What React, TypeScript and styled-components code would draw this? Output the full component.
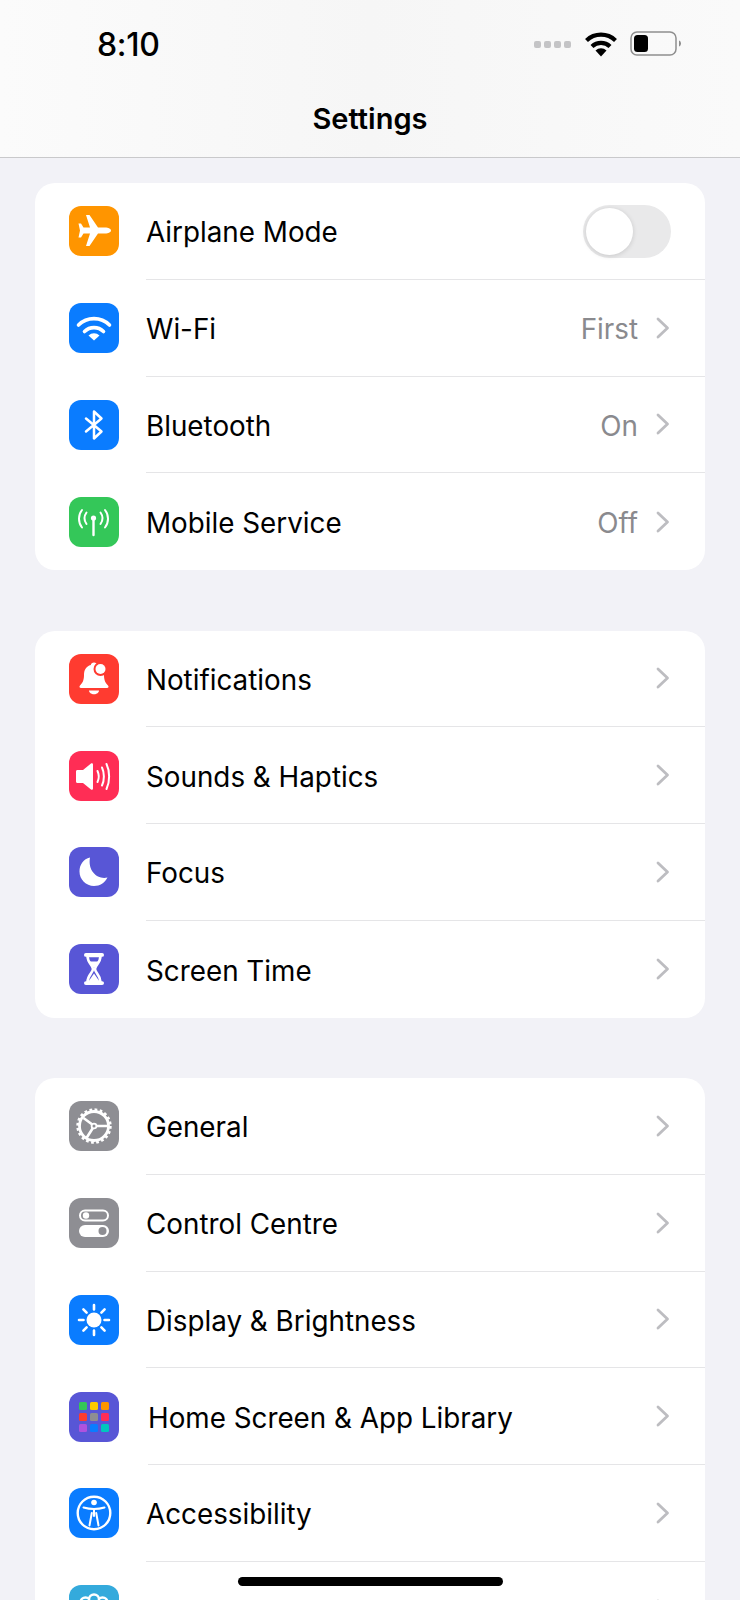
import React from "react";
import styled, { createGlobalStyle } from "styled-components";

const GlobalStyle = createGlobalStyle`
body {
  margin: 0;
  background: #f2f2f7;
  font-family: Inter, "Noto Sans", sans-serif;
}
`;

const Page = styled.div`
position: relative;
width: 740px;
height: 1600px;
overflow: hidden;
background: #f2f2f7;
`;

const Header = styled.header`
height: 158px;
box-sizing: border-box;
background: linear-gradient(90deg, #fbfbfb 0%, #f6f6f6 50%, #fafafa 100%);
border-bottom: 1px solid #c9c9cb;
display: flex;
flex-direction: column;
`;

const StatusBar = styled.div`
display: flex;
align-items: center;
justify-content: space-between;
padding: 25px 58px 0 97px;
height: 38px;
`;

const Time = styled.div`
font-size: 32px;
font-weight: 500;
color: #000;
letter-spacing: -0.3px;
`;

const StatusIcons = styled.div`
display: flex;
align-items: center;
gap: 12px;
`;

const Title = styled.h1`
margin: 38px 0 0;
font-size: 29px;
line-height: 36px;
font-weight: 600;
text-align: center;
color: #000;
`;

const Cards = styled.div`
display: flex;
flex-direction: column;
gap: 60.5px;
padding: 25px 35px 0;
`;

const Card = styled.section`
background: #fff;
border-radius: 20px;
overflow: hidden;
`;

const Row = styled.div`
display: flex;
align-items: center;
height: 96.75px;
padding-left: 34px;
`;

const IconTile = styled.div<{ $color: string }>`
flex: none;
width: 50px;
height: 50px;
border-radius: 12px;
background: ${(p) => p.$color};
`;

const RowBody = styled.div<{ $shift?: boolean; $last?: boolean }>`
flex: 1;
height: 100%;
box-sizing: border-box;
margin-left: ${(p) => (p.$shift ? 29 : 27)}px;
display: flex;
align-items: center;
border-bottom: ${(p) => (p.$last ? "none" : "1.5px solid #e5e5e7")};
padding-right: 35px;
`;

const Label = styled.span`
flex: 1;
font-size: 27.8px;
padding-top: 3px;
color: #000;
`;

const Value = styled.span`
font-size: 27.8px;
padding-top: 3px;
color: #8a8a8e;
margin-right: 18px;
`;

const Switch = styled.div`
width: 88px;
height: 53px;
border-radius: 27px;
background: #e9e9ea;
padding: 3px;
box-sizing: border-box;
margin: 1px -1px 0 0;
`;

const Knob = styled.div`
width: 47px;
height: 47px;
border-radius: 50%;
background: #fff;
box-shadow: 0 1px 5px rgba(0, 0, 0, 0.14);
`;

const HomeIndicator = styled.div`
position: absolute;
left: 238px;
bottom: 14px;
width: 265px;
height: 9px;
border-radius: 5px;
background: #000;
`;

const Chevron = () => (
  <svg width="14" height="22" viewBox="0 0 14 22" fill="none">
    <path d="M2 2l9.5 9L2 20" stroke="#bdbdc1" strokeWidth="2.8" strokeLinecap="round" strokeLinejoin="round" />
  </svg>
);

const Glyph = ({ children }: { children: React.ReactNode }) => (
  <svg width="50" height="50" viewBox="0 0 50 50" fill="none" style={{ display: "block" }}>
    {children}
  </svg>
);

const w = "#fff";

const icons: Record<string, React.ReactNode> = {
  plane: (
    <path
      fill={w}
      d="M42 24.5c0-1.6-2.5-3-6-3h-7L20.5 9H17l4 12.5h-6.5L12 17.5H9.5l1.500 7-1.500 7H12l2.500-4H21L17 40h3.500L29 27.500h7c3.500 0 6-1.400 6-3z"
    />
  ),
  wifi: (
    <>
      <path d="M9.500 22a22 22 0 0 1 31 0M15.500 28.500a13.500 13.500 0 0 1 19 0" stroke={w} strokeWidth="3.600" strokeLinecap="round" />
      <path fill={w} d="M25 37.500l-5.500-5a8 8 0 0 1 11 0z" />
    </>
  ),
  bluetooth: (
    <path d="M17 18.500L32.500 31.500 25 38.500V11.500l7.500 7L17 31.500" stroke={w} strokeWidth="2.500" strokeLinecap="round" strokeLinejoin="round" />
  ),
  antenna: (
    <>
      <circle cx="24.500" cy="21" r="2.600" fill={w} />
      <path d="M24.500 22v16" stroke={w} strokeWidth="2.400" strokeLinecap="round" />
      <path d="M17.500 15.500c-2.500 3.500-2.500 8 0 11.500M31.500 15.500c2.500 3.500 2.500 8 0 11.500M13 13c-4 5-4 12.500 0 17.500M36 13c4 5 4 12.500 0 17.500" stroke={w} strokeWidth="2" strokeLinecap="round" />
    </>
  ),
  bell: (
    <>
      <path
        fill={w}
        d="M25 8.500c-1.800 0-3 1-3.200 2.600-4.800 1.300-6.800 5.200-6.800 10 0 5.500-1.500 8-4 10.500-1 1-.5 2.500 1 2.500h26c1.500 0 2-1.500 1-2.500-2.500-2.500-4-5-4-10.500 0-4.800-2-8.700-6.800-10-.2-1.600-1.400-2.600-3.200-2.600z"
      />
      <path fill={w} d="M20 36.500h10c0 2-2.200 3.800-5 3.800s-5-1.800-5-3.800z" />
      <circle cx="31.500" cy="15" r="7" fill="#ff3b30" />
      <circle cx="31.500" cy="15" r="5" fill={w} />
    </>
  ),
  sound: (
    <>
      <path fill={w} d="M7 20.500c0-.8.500-1.500 1.500-1.500H14l8-6.500c.8-.6 2-.2 2 1v24c0 1.200-1.200 1.600-2 1L14 32H8.500C7.500 32 7 31.300 7 30.500z" />
      <path d="M28.500 20c1.500 3.200 1.500 7.800 0 11M33 16.500c2.500 5.200 2.500 12.800 0 18M37.500 13c3.500 7.200 3.500 17.800 0 25" stroke={w} strokeWidth="2" strokeLinecap="round" />
    </>
  ),
  moon: <path fill={w} d="M21 10.500C14.500 12 10.500 17.500 10.500 24.500c0 8 6.500 14.500 14.500 14.500 6 0 11-3.500 13.500-8.500-9.500 2.500-20-6-17.500-20z" />,
  hourglass: (
    <>
      <rect x="15" y="9" width="20" height="3.800" rx="1.900" fill={w} />
      <rect x="15" y="37.200" width="20" height="3.800" rx="1.900" fill={w} />
      <path d="M18.500 12c0 7 5.500 9 5.500 13s-5.500 6-5.500 13h13c0-7-5.500-9-5.500-13s5.500-6 5.500-13z" stroke={w} strokeWidth="2.600" />
      <path fill={w} d="M20.500 17.500h9c-1 3-3.200 4.800-4.500 6.500-1.300-1.700-3.500-3.500-4.500-6.500zM25 29.500l5.500 8h-11z" />
    </>
  ),
  gear: (
    <>
      <circle cx="25" cy="25" r="14.500" stroke={w} strokeWidth="2.800" />
      <circle cx="25" cy="25" r="16" stroke={w} strokeWidth="3.400" strokeDasharray="2.700 2.330" />
      <circle cx="25" cy="25" r="2.400" stroke={w} strokeWidth="1.800" />
      <path d="M23.300 23.500L14.500 17M27.400 25h12M23.700 27.200L17.500 37" stroke={w} strokeWidth="2.600" />
    </>
  ),
  toggles: (
    <>
      <rect x="11" y="12.500" width="28" height="10" rx="5" stroke={w} strokeWidth="2" />
      <circle cx="17" cy="17.500" r="3.200" fill={w} />
      <rect x="10" y="27" width="30" height="12" rx="6" fill={w} />
      <circle cx="33.500" cy="33" r="4" fill="#8e8e93" />
    </>
  ),
  sun: (
    <>
      <circle cx="25" cy="25" r="7.500" fill={w} />
      <path
        d="M25 10v4.500M25 35.500V40M10 25h4.500M35.500 25H40M14.400 14.400l3.200 3.200M32.400 32.400l3.200 3.200M14.400 35.600l3.200-3.200M32.400 17.600l3.200-3.200"
        stroke={w}
        strokeWidth="2.600"
        strokeLinecap="round"
      />
    </>
  ),
  grid: (
    <>
      {["#34c759", "#ffcc00", "#ff9500", "#ff3b30", "#8e8e93", "#ff2d55", "#af52de", "#0a7cff", "#00c7be"].map((c, i) => (
        <rect key={c} x={10 + (i % 3) * 11} y={10 + Math.floor(i / 3) * 11} width="8" height="8" rx="1.500" fill={c} />
      ))}
    </>
  ),
  access: (
    <>
      <circle cx="25" cy="25" r="16.300" stroke={w} strokeWidth="2.400" />
      <circle cx="25" cy="14.500" r="2.800" fill={w} />
      <path d="M14.500 19.500c3.500 1 7 1.500 10.500 1.500s7-.5 10.500-1.500M25 21v7M22.800 25l-2.300 12.500M27.200 25l2.300 12.500" stroke={w} strokeWidth="2" strokeLinecap="round" />
    </>
  ),
  wallpaper: (
    <>
      <circle cx="16.500" cy="17.500" r="5" stroke={w} strokeWidth="2.500" />
      <circle cx="33.500" cy="17.500" r="5" stroke={w} strokeWidth="2.500" />
      <circle cx="25" cy="14.500" r="5" stroke={w} strokeWidth="2.500" fill="#34aadc" />
    </>
  ),
};

type Item = {
  label: string;
  icon: string;
  color: string;
  value?: string;
  toggle?: boolean;
  shift?: boolean;
};

const groups: Item[][] = [
  [
    { label: "Airplane Mode", icon: "plane", color: "#ff9500", toggle: true },
    { label: "Wi-Fi", icon: "wifi", color: "#0a7cff", value: "First" },
    { label: "Bluetooth", icon: "bluetooth", color: "#0a7cff", value: "On" },
    { label: "Mobile Service", icon: "antenna", color: "#34c759", value: "Off" },
  ],
  [
    { label: "Notifications", icon: "bell", color: "#ff3b30" },
    { label: "Sounds & Haptics", icon: "sound", color: "#ff2d55" },
    { label: "Focus", icon: "moon", color: "#5856d6" },
    { label: "Screen Time", icon: "hourglass", color: "#5856d6" },
  ],
  [
    { label: "General", icon: "gear", color: "#8e8e93" },
    { label: "Control Centre", icon: "toggles", color: "#8e8e93" },
    { label: "Display & Brightness", icon: "sun", color: "#0a7cff" },
    { label: "Home Screen & App Library", icon: "grid", color: "#5856d6", shift: true },
    { label: "Accessibility", icon: "access", color: "#0a7cff" },
    // row runs off the bottom of the screen, only the top of its icon shows
    { label: "", icon: "wallpaper", color: "#34aadc" },
  ],
];

const App = () => {
  return (
    <Page>
      <GlobalStyle />
      <Header>
        <StatusBar>
          <Time>8:10</Time>
          <StatusIcons>
            <svg width="38" height="7" viewBox="0 0 38 7">
              {[0, 10, 20, 30].map((x) => (
                <rect key={x} x={x} y="0" width="7" height="7" rx="2" fill="#c4c4c6" />
              ))}
            </svg>
            <svg width="34" height="26" viewBox="0 0 34 26" fill="none">
              <path d="M2.500 9.500a21 21 0 0 1 29 0M8 15.500a13 13 0 0 1 18 0" stroke="#000" strokeWidth="4.200" />
              <path fill="#000" d="M17 25.500l-5.500-6a8 8 0 0 1 11 0z" />
            </svg>
            <svg width="52" height="26" viewBox="0 0 52 26" fill="none">
              <rect x="1" y="1" width="45" height="23" rx="6" stroke="#8e8e8e" strokeWidth="1.500" />
              <rect x="4" y="4" width="14" height="17" rx="3.500" fill="#000" />
              <path d="M49 9.500c1.500.5 2 2 2 3s-.5 2.500-2 3z" fill="#8e8e8e" />
            </svg>
          </StatusIcons>
        </StatusBar>
        <Title>Settings</Title>
      </Header>
      <Cards>
        {groups.map((group) => (
          <Card key={group[0].label}>
            {group.map((item, i) => (
              <Row key={item.icon}>
                <IconTile $color={item.color}>
                  <Glyph>{icons[item.icon]}</Glyph>
                </IconTile>
                <RowBody $shift={item.shift} $last={i === group.length - 1}>
                  <Label>{item.label}</Label>
                  {item.value && <Value>{item.value}</Value>}
                  {item.toggle ? (
                    <Switch>
                      <Knob />
                    </Switch>
                  ) : (
                    <Chevron />
                  )}
                </RowBody>
              </Row>
            ))}
          </Card>
        ))}
      </Cards>
      <HomeIndicator />
    </Page>
  );
};

export default App;
